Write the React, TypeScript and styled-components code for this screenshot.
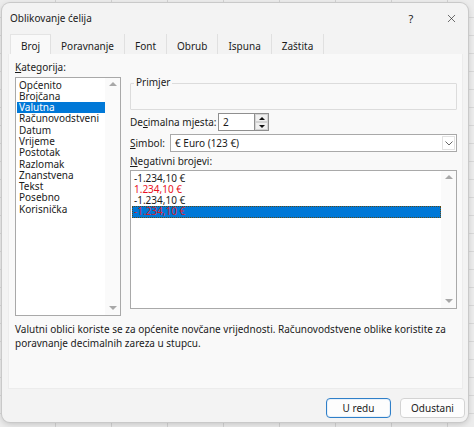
import React from 'react';
import styled, { createGlobalStyle } from 'styled-components';
import { X } from 'lucide-react';

const Global = createGlobalStyle`
  html, body { margin: 0; padding: 0; }
  body {
    width: 474px;
    height: 427px;
    overflow: hidden;
    font-family: "Noto Sans", "Open Sans", sans-serif;
    color: #1b1b1b;
  }
`;

const Backdrop = styled.div`
  width: 474px;
  height: 427px;
  box-sizing: border-box;
  padding: 3px 6px 5px 2px;
  background-color: #ececec;
  background-image:
    repeating-linear-gradient(90deg, transparent 0 55px, #d2d2d2 55px 56px),
    repeating-linear-gradient(180deg, transparent 0 17px, #d8d8d8 17px 18px);
`;

const Dialog = styled.div`
  width: 466px;
  height: 419px;
  display: flex;
  flex-direction: column;
  background: #f3f3f3;
  border-radius: 8px;
  box-shadow: 0 0 0 1px #c9c9c9, 0 2px 6px rgba(0, 0, 0, 0.18);
  overflow: hidden;
`;

const TitleBar = styled.div`
  height: 31px;
  display: flex;
  align-items: center;
  padding-left: 8px;
  font-size: 10px;
`;

const Title = styled.div`
  flex: 1;
  padding-bottom: 2px;
`;

const TitleButton = styled.div<{ $w: number }>`
  width: ${p => p.$w}px;
  height: 31px;
  display: flex;
  align-items: center;
  justify-content: center;
  font-size: 11px;
  color: #222;
`;

const TabBar = styled.div`
  height: 20px;
  display: flex;
  padding-left: 8px;
`;

const Tab = styled.div<{ $active?: boolean }>`
  height: 20px;
  padding: 3px 10px 0;
  display: flex;
  align-items: center;
  font-size: 10px;
  box-sizing: border-box;
  background: ${p => (p.$active ? '#f9f9f9' : 'transparent')};
  border-right: 1px solid #e0e0e0;
  border-left: ${p => (p.$active ? '1px solid #e4e4e4' : 'none')};
  border-top: ${p => (p.$active ? '1px solid #e4e4e4' : 'none')};
`;

const Panel = styled.div`
  height: 335px;
  margin: 0 5px 0 6px;
  background: #f9f9f9;
  border: 1px solid #ececec;
  border-top: none;
  box-sizing: border-box;
  padding: 7px 6px 0 6px;
  font-size: 10px;
`;

const Columns = styled.div`
  display: grid;
  grid-template-columns: 106px 327px;
  column-gap: 9px;
`;

const Column = styled.div`
  display: flex;
  flex-direction: column;
`;

const Label = styled.div<{ $mt?: number }>`
  height: 13px;
  line-height: 13px;
  margin-top: ${p => p.$mt ?? 0}px;
  white-space: nowrap;
`;

const Key = styled.span`
  text-decoration: underline;
  text-underline-offset: 1px;
`;

const ListBox = styled.div<{ $h: number; $mt: number }>`
  height: ${p => p.$h}px;
  margin-top: ${p => p.$mt}px;
  box-sizing: border-box;
  border: 1px solid #a9a9a9;
  background: #fff;
  display: flex;
`;

const ListItems = styled.div`
  flex: 1;
  padding: 1.5px 0 0 1px;
  display: flex;
  flex-direction: column;
`;

const Item = styled.div<{ $sel?: boolean; $red?: boolean; $focus?: boolean }>`
  height: 11.3px;
  line-height: 11.3px;
  padding-left: 2px;
  white-space: nowrap;
  background: ${p => (p.$sel ? '#0078d7' : 'transparent')};
  color: ${p => (p.$red ? (p.$sel ? '#d4222d' : '#e81123') : p.$sel ? '#fff' : '#1b1b1b')};
  outline: ${p => (p.$focus ? '1px dotted #5a4a1a' : 'none')};
  outline-offset: -1px;
`;

const ScrollTrack = styled.div`
  width: 15px;
  display: flex;
  flex-direction: column;
  justify-content: space-between;
  align-items: center;
  padding: 4px 0 5px;
  background: #fafafa;
`;

const Arrow = styled.div<{ $down?: boolean }>`
  width: 0;
  height: 0;
  border-left: 4px solid transparent;
  border-right: 4px solid transparent;
  ${p =>
    p.$down ? 'border-top: 4px solid #a8a8a8;' : 'border-bottom: 4px solid #a8a8a8;'}
`;

const GroupBox = styled.div`
  margin-top: 22px;
  height: 27px;
  box-sizing: border-box;
  border: 1px solid #dcdcdc;
  border-radius: 1px;
  position: relative;
`;

const Legend = styled.span`
  position: absolute;
  top: -8px;
  left: 3px;
  padding: 0 2px;
  background: #f9f9f9;
  line-height: 13px;
`;

const FieldRow = styled.div`
  margin-top: 3px;
  height: 18px;
  display: flex;
  align-items: center;
`;

const FieldLabel = styled.div<{ $w: number }>`
  width: ${p => p.$w}px;
  white-space: nowrap;
`;

const TextBox = styled.div<{ $w: number }>`
  width: ${p => p.$w}px;
  height: 18px;
  box-sizing: border-box;
  border: 1px solid #8f8f8f;
  background: #fff;
  display: flex;
  align-items: center;
  padding-left: 4px;
`;

const Spinner = styled.div`
  width: 14px;
  height: 18px;
  box-sizing: border-box;
  border: 1px solid #8f8f8f;
  border-left: none;
  background: #fff;
  display: flex;
  flex-direction: column;
`;

const SpinHalf = styled.div<{ $down?: boolean }>`
  flex: 1;
  display: flex;
  align-items: center;
  justify-content: center;
  background: #f0f0f0;
  border: 1px solid #d4d4d4;
  &::after {
    content: '';
    border-left: 3px solid transparent;
    border-right: 3px solid transparent;
    ${p => (p.$down ? 'border-top: 3px solid #111;' : 'border-bottom: 3px solid #111;')}
  }
`;

const Select = styled.div`
  flex: 1;
  height: 18px;
  box-sizing: border-box;
  border: 1px solid #a9a9a9;
  background: #fff;
  display: flex;
  align-items: center;
  padding-left: 4px;
`;

const SelectText = styled.div`
  flex: 1;
`;

const Chevron = styled.div`
  width: 13px;
  height: 14px;
  margin-right: 1px;
  border: 1px solid #e2e2e2;
  box-sizing: border-box;
  display: flex;
  align-items: center;
  justify-content: center;
  color: #777;
`;

const Description = styled.div`
  margin-top: 6px;
  line-height: 14px;
  font-size: 10px;
`;

const Footer = styled.div`
  flex: 1;
  display: flex;
  justify-content: flex-end;
  align-items: flex-start;
  padding: 9px 3px 0 0;
  gap: 9px;
`;

const Button = styled.div<{ $primary?: boolean }>`
  width: 65px;
  height: 20px;
  box-sizing: border-box;
  border-radius: 4px;
  display: flex;
  align-items: center;
  justify-content: center;
  font-size: 10px;
  background: #fdfdfd;
  border: 1px solid ${p => (p.$primary ? '#2f7fc8' : '#d3d3d3')};
  box-shadow: ${p => (p.$primary ? 'inset 0 0 0 1px #e8f1fa' : 'none')};
`;

const categories = [
  'Općenito',
  'Brojčana',
  'Valutna',
  'Računovodstveni',
  'Datum',
  'Vrijeme',
  'Postotak',
  'Razlomak',
  'Znanstvena',
  'Tekst',
  'Posebno',
  'Korisnička',
];

const negatives = [
  { t: '-1.234,10 €', red: false },
  { t: '1.234,10 €', red: true },
  { t: '-1.234,10 €', red: false },
  { t: '-1.234,10 €', red: true, sel: true },
];

const tabs = ['Broj', 'Poravnanje', 'Font', 'Obrub', 'Ispuna', 'Zaštita'];

export default function App() {
  return (
    <>
      <Global />
      <Backdrop>
        <Dialog>
          <TitleBar>
            <Title>Oblikovanje ćelija</Title>
            <TitleButton $w={46}>?</TitleButton>
            <TitleButton $w={34}>
              <X size={13} strokeWidth={1.2} />
            </TitleButton>
          </TitleBar>
          <TabBar>
            {tabs.map((t, i) => (
              <Tab key={t} $active={i === 0}>
                {t}
              </Tab>
            ))}
          </TabBar>
          <Panel>
            <Columns>
              <Column>
                <Label>
                  <Key>K</Key>ategorija:
                </Label>
                <ListBox $h={239} $mt={3}>
                  <ListItems>
                    {categories.map((c, i) => (
                      <Item key={c} $sel={i === 2}>
                        {c}
                      </Item>
                    ))}
                  </ListItems>
                  <ScrollTrack>
                    <Arrow />
                    <Arrow $down />
                  </ScrollTrack>
                </ListBox>
              </Column>
              <Column>
                <GroupBox>
                  <Legend>Primjer</Legend>
                </GroupBox>
                <FieldRow>
                  <FieldLabel $w={88}>
                    De<Key>c</Key>imalna mjesta:
                  </FieldLabel>
                  <TextBox $w={37}>2</TextBox>
                  <Spinner>
                    <SpinHalf />
                    <SpinHalf $down />
                  </Spinner>
                </FieldRow>
                <FieldRow>
                  <FieldLabel $w={40}>
                    <Key>S</Key>imbol:
                  </FieldLabel>
                  <Select>
                    <SelectText>€ Euro (123 €)</SelectText>
                    <Chevron>
                      <svg width="8" height="5" viewBox="0 0 8 5">
                        <path d="M0.5 0.5 L4 4 L7.5 0.5" fill="none" stroke="#666" strokeWidth="1" />
                      </svg>
                    </Chevron>
                  </Select>
                </FieldRow>
                <Label $mt={3}>
                  <Key>N</Key>egativni brojevi:
                </Label>
                <ListBox $h={139} $mt={2}>
                  <ListItems>
                    {negatives.map((n, i) => (
                      <Item key={i} $red={n.red} $sel={n.sel} $focus={n.sel}>
                        {n.t}
                      </Item>
                    ))}
                  </ListItems>
                  <ScrollTrack>
                    <Arrow />
                    <Arrow $down />
                  </ScrollTrack>
                </ListBox>
              </Column>
            </Columns>
            <Description>
              Valutni oblici koriste se za općenite novčane vrijednosti. Računovodstvene oblike koristite za
              <br />
              poravnanje decimalnih zareza u stupcu.
            </Description>
          </Panel>
          <Footer>
            <Button $primary>U redu</Button>
            <Button>Odustani</Button>
          </Footer>
        </Dialog>
      </Backdrop>
    </>
  );
}
